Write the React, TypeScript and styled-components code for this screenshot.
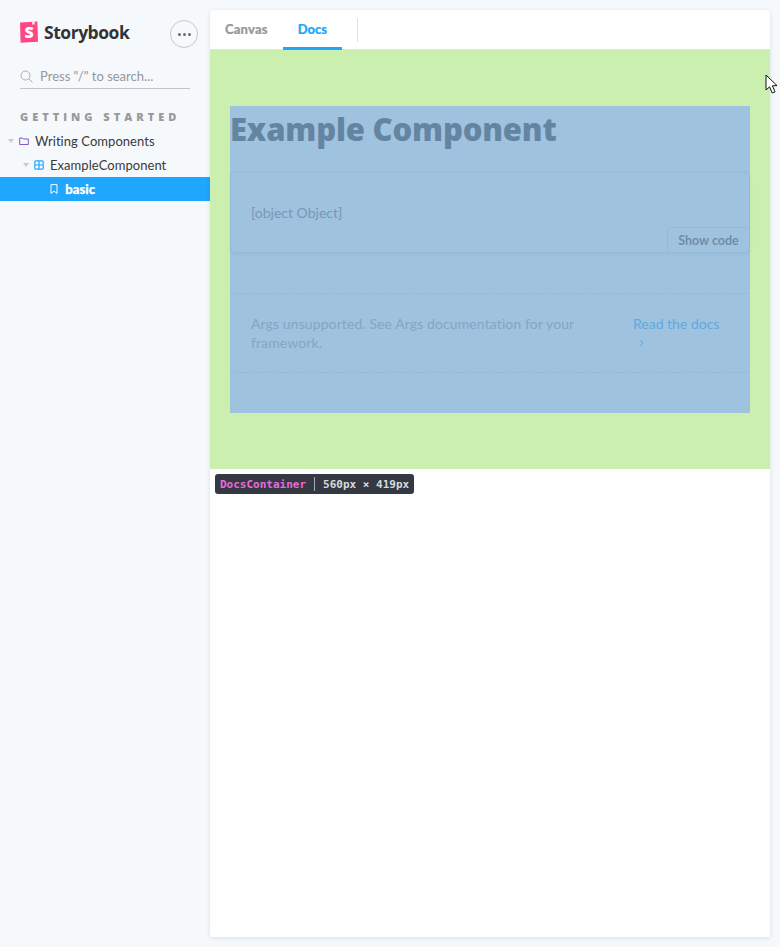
import React from "react"
import styled, { createGlobalStyle } from "styled-components"

const GlobalStyle = createGlobalStyle`
    html, body {
        margin: 0;
        padding: 0;
        height: 100%;
        overflow: hidden;
        background: #f6f9fc;
        font-family: "Lato", "Open Sans", sans-serif;
    }
    #root {
        height: 100%;
    }
    * {
        box-sizing: border-box;
    }
`

const Page = styled.div`
    display: flex;
    height: 947px;
    width: 780px;
    position: relative;
    background: #f6f9fc;
`

const Sidebar = styled.nav`
    width: 210px;
    flex: none;
    padding-top: 20px;
`

const Brand = styled.div`
    display: flex;
    align-items: center;
    height: 28px;
    padding: 0 12px 0 20px;
    justify-content: space-between;
`

const Logo = styled.div`
    display: flex;
    align-items: center;
    gap: 6px;
    margin-top: -5px;
`

const LogoText = styled.span`
    font-family: "Open Sans", sans-serif;
    font-size: 17.5px;
    font-weight: 700;
    letter-spacing: -0.47px;
    color: #333333;
`

const MenuButton = styled.button`
    width: 28px;
    height: 28px;
    border-radius: 50%;
    border: 1px solid #c4c8cc;
    background: transparent;
    display: flex;
    align-items: center;
    justify-content: center;
    gap: 2px;
    padding: 0;
`

const Dot = styled.span`
    width: 3px;
    height: 3px;
    border-radius: 50%;
    background: #666b70;
`

const Search = styled.div`
    display: flex;
    align-items: center;
    gap: 7px;
    height: 25px;
    margin: 16px 20px 0;
    border-bottom: 1px solid #c2c5c8;
    font-size: 13px;
    color: #94989c;
`

const SectionLabel = styled.div`
    margin: 19px 0 0 20px;
    height: 18px;
    font-family: "Open Sans", sans-serif;
    font-size: 11px;
    line-height: 18px;
    font-weight: 800;
    letter-spacing: 4.02px;
    color: #999999;
`

const TreeList = styled.ul`
    list-style: none;
    margin: 3px 0 0;
    padding: 0;
`

const TreeRow = styled.li<{ $depth: number; $selected?: boolean }>`
    display: flex;
    align-items: center;
    height: 24px;
    padding-left: ${(p) => 8 + p.$depth * 15}px;
    font-size: 13px;
    font-weight: ${(p) => (p.$selected ? 900 : 400)};
    letter-spacing: 0.05px;
    color: ${(p) => (p.$selected ? "#ffffff" : "#3a3a3a")};
    background: ${(p) => (p.$selected ? "#1ea7fd" : "transparent")};
    -webkit-text-stroke: ${(p) => (p.$selected ? "0.25px #ffffff" : "0")};
`

const Caret = styled.span`
    width: 0;
    height: 0;
    margin-right: 5px;
    border-left: 3px solid transparent;
    border-right: 3px solid transparent;
    border-top: 4px solid #c9cbcd;
`

const RowIcon = styled.svg`
    width: 10px;
    height: 10px;
    flex: none;
    margin-right: 6px;
`

const Main = styled.main`
    width: 560px;
    margin: 10px 0;
    background: #ffffff;
    border-radius: 4px 4px 0 0;
    box-shadow: 0 1px 5px rgba(0, 0, 0, 0.1);
    display: flex;
    flex-direction: column;
`

const TabBar = styled.div`
    display: flex;
    align-items: stretch;
    height: 40px;
    flex: none;
    box-shadow: inset 0 -1px 0 #e3e5e6;
`

const Tab = styled.div<{ $active?: boolean }>`
    display: flex;
    align-items: center;
    padding: 0 15px;
    font-size: 13px;
    font-weight: 900;
    letter-spacing: ${(p) => (p.$active ? "0" : "0.17px")};
    color: ${(p) => (p.$active ? "#1ea7fd" : "#999999")};
    border-bottom: 3px solid ${(p) => (p.$active ? "#1ea7fd" : "transparent")};
    -webkit-text-stroke: 0.2px ${(p) => (p.$active ? "#1ea7fd" : "#999999")};
`

const TabDivider = styled.span`
    width: 1px;
    height: 24px;
    margin: 8px 0 0 15px;
    background: #e2e3e4;
`

const DocsPadding = styled.div`
    padding: 56px 20px;
    background: #cbefaf;
    height: 419px;
    flex: none;
`

const DocsContent = styled.div`
    background: #9fc2df;
    height: 307px;
`

const Title = styled.h1`
    margin: 0;
    height: 66px;
    font-family: "Open Sans", sans-serif;
    font-size: 31px;
    line-height: 46px;
    font-weight: 800;
    letter-spacing: -0.18px;
    color: #6485a2;
`

const Preview = styled.div`
    position: relative;
    height: 81px;
    padding: 30px 20px 0;
    border: 1px solid #97bad7;
    border-radius: 4px;
    font-size: 14px;
    line-height: 20px;
    color: #7a97b3;
    box-shadow: 0 1px 3px rgba(80, 120, 160, 0.1);
`

const ShowCode = styled.div`
    position: absolute;
    right: -1px;
    bottom: -1px;
    width: 83px;
    height: 26px;
    padding-top: 1px;
    display: flex;
    align-items: center;
    justify-content: center;
    border: 1px solid #97bad7;
    border-radius: 4px 0 4px 0;
    font-size: 12.5px;
    font-weight: 700;
    color: #6f8eaa;
`

const ArgsNote = styled.div`
    display: flex;
    justify-content: space-between;
    margin-top: 40px;
    height: 80px;
    padding: 20px 30px 0 21px;
    border-top: 1px dashed #95b8d5;
    border-bottom: 1px dashed #95b8d5;
    font-size: 14px;
    line-height: 19px;
    color: #86a5c1;
`

const ArgsText = styled.div`
    width: 340px;
    letter-spacing: 0.1px;
`

const ArgsLink = styled.div`
    width: 87px;
    color: #62a8de;
`

const Chevron = styled.svg`
    display: block;
    margin: 6px 0 0 4px;
    width: 8px;
    height: 8px;
`

const InspectLabel = styled.div`
    position: absolute;
    left: 215px;
    top: 474px;
    height: 20px;
    display: flex;
    align-items: center;
    padding: 0 5px;
    border-radius: 3px;
    background: #333842;
    font-family: "DejaVu Sans Mono", monospace;
    font-size: 11px;
    font-weight: 700;
    color: #d7dade;
`

const LabelName = styled.span`
    color: #e86bd8;
`

const LabelDivider = styled.span`
    width: 1px;
    height: 14px;
    margin: 0 8px;
    background: #a5a8ad;
`

const Cursor = styled.svg`
    position: absolute;
    left: 765px;
    top: 74px;
    width: 14px;
    height: 21px;
`

export default function App() {
    return (
        <Page>
            <GlobalStyle />
            <Sidebar>
                <Brand>
                    <Logo>
                        <svg width="18" height="22" viewBox="0 0 18 22">
                            <path d="M0 1.6 L17.4 0.4 L18 20.8 L0.6 21.8 Z" fill="#ff4785" />
                            <path d="M12.4 0.7 L12.2 4 L13.3 3.1 L14.4 4 L14.6 0.6 Z" fill="#ffffff" />
                            <text x="9" y="17" textAnchor="middle" fontFamily="Open Sans" fontWeight="800" fontSize="16" fill="#ffffff">S</text>
                        </svg>
                        <LogoText>Storybook</LogoText>
                    </Logo>
                    <MenuButton>
                        <Dot />
                        <Dot />
                        <Dot />
                    </MenuButton>
                </Brand>
                <Search>
                    <svg width="13" height="13" viewBox="0 0 13 13" fill="none" stroke="#a9acaf" strokeWidth="1">
                        <circle cx="5.5" cy="5.5" r="4.5" />
                        <path d="M9 9 L12.5 12.5" />
                    </svg>
                    Press "/" to search...
                </Search>
                <SectionLabel>GETTING STARTED</SectionLabel>
                <TreeList>
                    <TreeRow $depth={0}>
                        <Caret />
                        <RowIcon viewBox="0 0 10 10" fill="none" stroke="#7e57d1" strokeWidth="1">
                            <path d="M0.7 2 H3.6 L4.4 3 H9.3 V8.5 H0.7 Z" />
                        </RowIcon>
                        Writing Components
                    </TreeRow>
                    <TreeRow $depth={1}>
                        <Caret />
                        <RowIcon viewBox="0 0 10 10" fill="none" stroke="#1ea7fd" strokeWidth="1.2">
                            <rect x="0.8" y="0.8" width="8.4" height="8.4" rx="1" />
                            <path d="M5 1 V9 M1 5 H9" />
                        </RowIcon>
                        ExampleComponent
                    </TreeRow>
                    <TreeRow $depth={2.75} $selected>
                        <RowIcon viewBox="0 0 10 10" fill="none" stroke="#ffffff" strokeWidth="1">
                            <path d="M2 0.6 H8 V9.4 L5 7.2 L2 9.4 Z" />
                        </RowIcon>
                        basic
                    </TreeRow>
                </TreeList>
            </Sidebar>
            <Main>
                <TabBar>
                    <Tab>Canvas</Tab>
                    <Tab $active>Docs</Tab>
                    <TabDivider />
                </TabBar>
                <DocsPadding>
                    <DocsContent>
                        <Title>Example Component</Title>
                        <Preview>
                            [object Object]
                            <ShowCode>Show code</ShowCode>
                        </Preview>
                        <ArgsNote>
                            <ArgsText>Args unsupported. See Args documentation for your framework.</ArgsText>
                            <ArgsLink>
                                Read the docs
                                <Chevron viewBox="0 0 8 8" fill="none" stroke="#62a8de" strokeWidth="1">
                                    <path d="M2.5 0.5 L6 4 L2.5 7.5" />
                                </Chevron>
                            </ArgsLink>
                        </ArgsNote>
                    </DocsContent>
                </DocsPadding>
            </Main>
            <InspectLabel>
                <LabelName>DocsContainer</LabelName>
                <LabelDivider />
                560px × 419px
            </InspectLabel>
            <Cursor viewBox="0 0 14 21">
                <path d="M1 1 L1 16 L4.6 12.8 L7.2 19 L10 17.8 L7.4 11.8 L12 11.6 Z" fill="#ffffff" stroke="#111111" strokeWidth="1" />
            </Cursor>
        </Page>
    )
}
